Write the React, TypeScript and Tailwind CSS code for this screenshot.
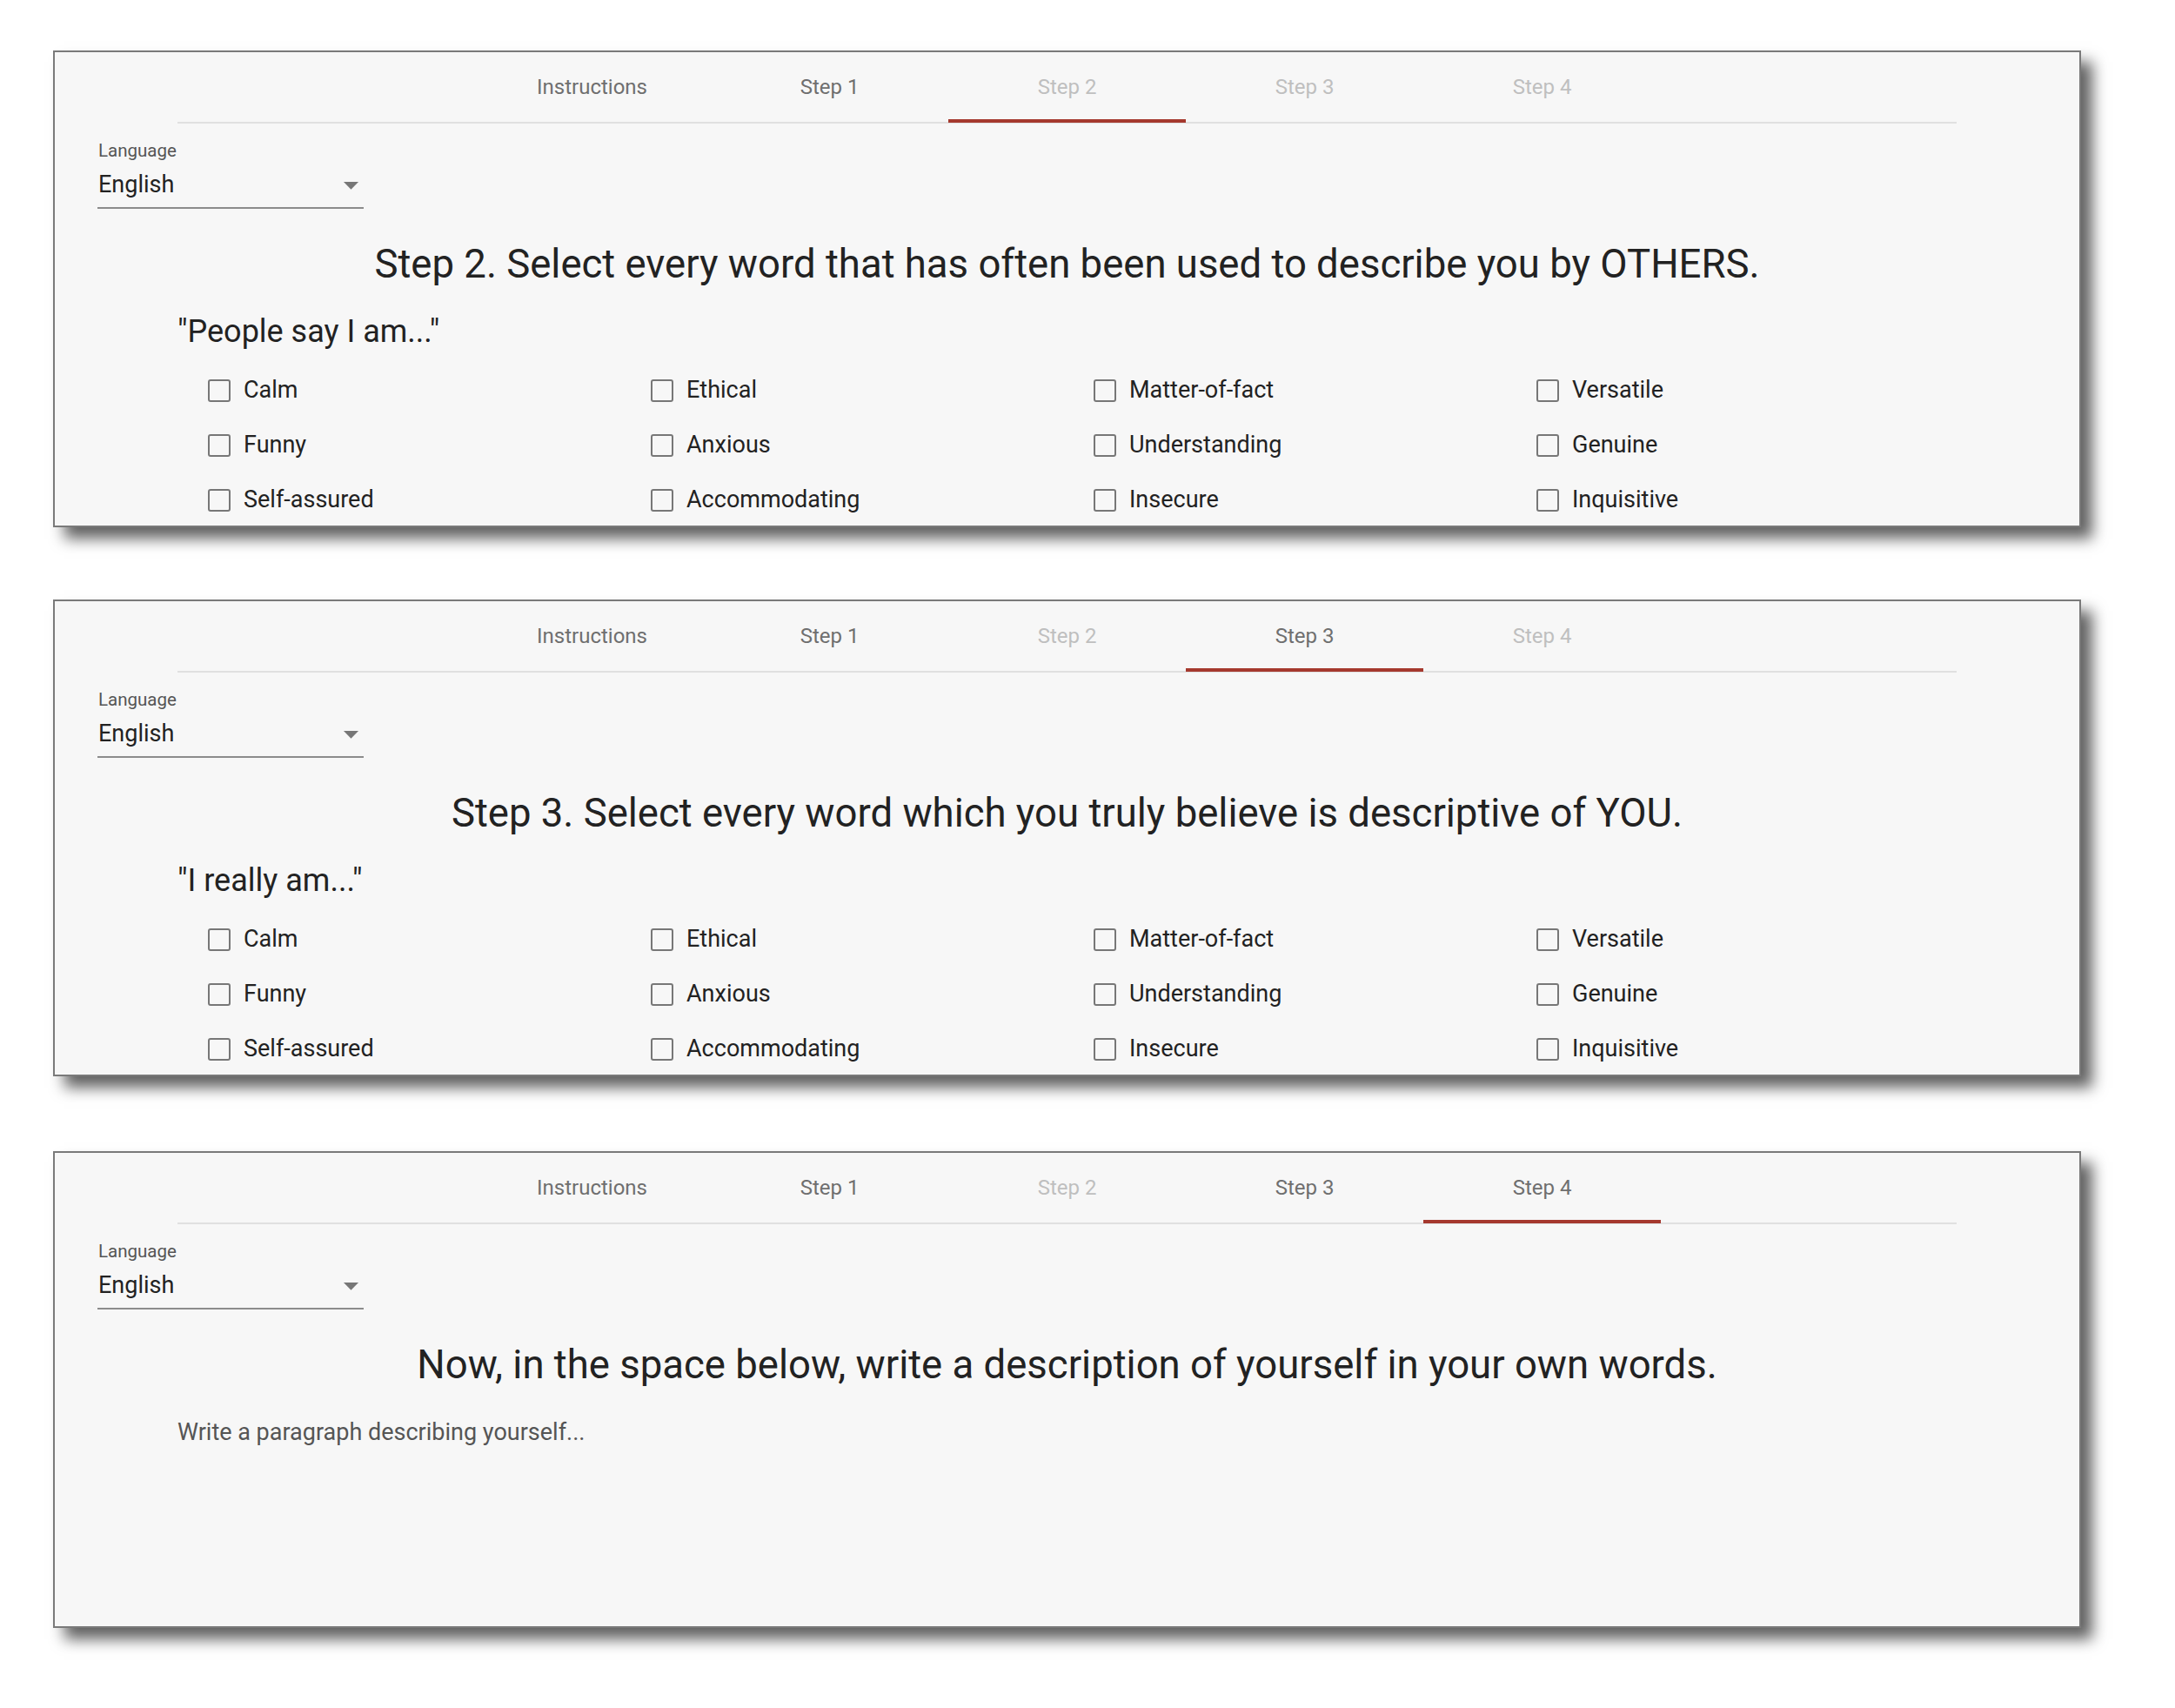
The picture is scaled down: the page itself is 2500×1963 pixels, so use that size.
import { useState } from "react";

type TabState = "dark" | "light";

const TAB_LABELS = ["Instructions", "Step 1", "Step 2", "Step 3", "Step 4"];

const WORDS = [
  ["Calm", "Ethical", "Matter-of-fact", "Versatile"],
  ["Funny", "Anxious", "Understanding", "Genuine"],
  ["Self-assured", "Accommodating", "Insecure", "Inquisitive"],
];

function Tabs({ active, states }: { active: number; states: TabState[] }) {
  return (
    <div className="mx-[141px] flex h-[82px] justify-center border-b-2 border-[#e0e0e0]">
      {TAB_LABELS.map((label, i) => (
        <div key={label} className="relative flex w-[273px] justify-center pt-[28px]">
          <span
            className={
              "text-[24px] leading-none " +
              (states[i] === "dark" ? "text-[#6f6f6f]" : "text-[#bfbfbf]")
            }
          >
            {label}
          </span>
          {i === active && (
            <span className="absolute bottom-[-1px] left-0 h-[4px] w-full bg-[#a5392e]" />
          )}
        </div>
      ))}
    </div>
  );
}

function LanguageSelect() {
  return (
    <div className="ml-[49px] mt-[21px] w-[306px]">
      <div className="ml-px text-[20.5px] leading-none text-[#555]">Language</div>
      <div className="mt-[15px] flex items-center justify-between border-b-2 border-[#8c8c8c] pb-[12px]">
        <span className="ml-px text-[27px] leading-none text-[#222]">English</span>
        <svg viewBox="0 0 24 24" className="mr-[-6px] h-[41px] w-[41px] -my-[8px] fill-[#777]">
          <path d="M7 10l5 5 5-5z" />
        </svg>
      </div>
    </div>
  );
}

function Checkbox({ label }: { label: string }) {
  const [on, setOn] = useState(false);
  return (
    <label className="flex h-[63px] cursor-pointer items-center">
      <span
        onClick={() => setOn(!on)}
        className={
          "h-[26px] w-[26px] shrink-0 rounded-[3px] border-[2.5px] border-[#777] " +
          (on ? "bg-[#a5392e]" : "")
        }
      />
      <span className="ml-[15px] text-[27px] leading-none text-[#222]">{label}</span>
    </label>
  );
}

function Panel({ children }: { children: React.ReactNode }) {
  return (
    <div className="ml-[61px] h-[548px] w-[2331px] overflow-hidden border-2 border-[#7a7a7a] bg-[#f7f7f7] shadow-[13px_13px_16px_rgba(0,0,0,0.62)]">
      {children}
    </div>
  );
}

function WordStep({
  active,
  states,
  title,
  quote,
}: {
  active: number;
  states: TabState[];
  title: string;
  quote: string;
}) {
  return (
    <Panel>
      <Tabs active={active} states={states} />
      <LanguageSelect />
      <h2 className="mt-[41px] text-center text-[45.5px] leading-none text-[#222]">{title}</h2>
      <p className="ml-[141px] mt-[37px] text-[36px] leading-none text-[#222]">{quote}</p>
      <div className="ml-[176px] mt-[18px] grid grid-cols-[repeat(4,509px)]">
        {WORDS.flat().map((w) => (
          <Checkbox key={w} label={w} />
        ))}
      </div>
    </Panel>
  );
}

export default function App() {
  return (
    <div className="min-h-[1963px] bg-white pt-[58px] font-[Roboto,sans-serif]">
      <WordStep
        active={2}
        states={["dark", "dark", "light", "light", "light"]}
        title="Step 2. Select every word that has often been used to describe you by OTHERS."
        quote={'"People say I am..."'}
      />
      <div className="h-[83px]" />
      <WordStep
        active={3}
        states={["dark", "dark", "light", "dark", "light"]}
        title="Step 3. Select every word which you truly believe is descriptive of YOU."
        quote={'"I really am..."'}
      />
      <div className="h-[86px]" />
      <Panel>
        <Tabs active={4} states={["dark", "dark", "light", "dark", "dark"]} />
        <LanguageSelect />
        <h2 className="mt-[41px] text-center text-[45.5px] leading-none text-[#222]">
          Now, in the space below, write a description of yourself in your own words.
        </h2>
        <textarea
          readOnly
          rows={4}
          placeholder="Write a paragraph describing yourself..."
          className="ml-[141px] mt-[42px] block w-[2044px] resize-none border-0 bg-transparent text-[27px] leading-none text-[#222] outline-none placeholder:text-[#555]"
        />
      </Panel>
    </div>
  );
}
